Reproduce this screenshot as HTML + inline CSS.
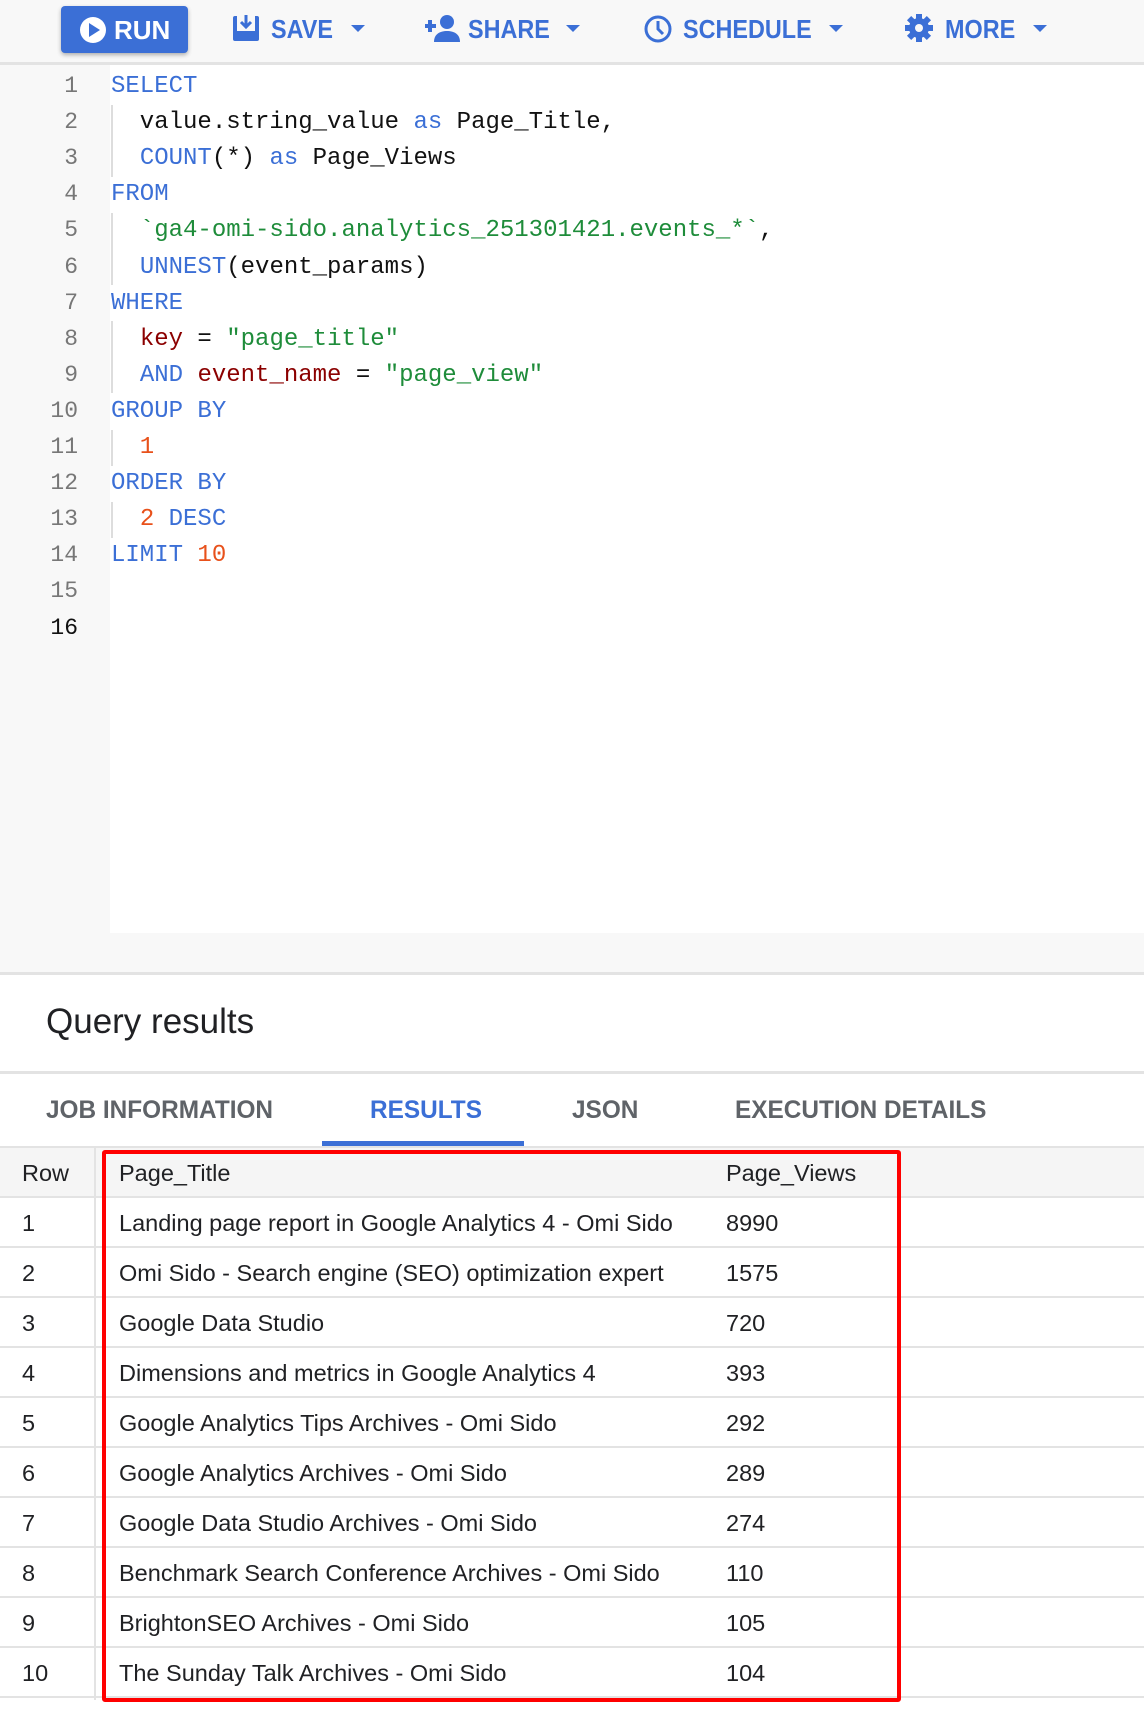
<!DOCTYPE html>
<html><head><meta charset="utf-8"><style>
*{margin:0;padding:0;box-sizing:border-box}
body{width:1144px;height:1722px;background:#fff;font-family:"Liberation Sans",sans-serif;position:relative;overflow:hidden}
.tb{position:absolute;left:0;top:0;width:1144px;height:65px;background:#f8f8f8;border-bottom:3px solid #e3e3e3}
.run{position:absolute;left:61px;top:6px;width:127px;height:47px;background:#3b6fd6;border-radius:4px;box-shadow:0 2px 4px rgba(0,0,0,.3);color:#fff;font-size:26px;font-weight:bold}
.lbl{position:absolute;top:14px;font-size:26px;color:#3b6fd6;font-weight:bold;transform:scaleX(.9);transform-origin:left}
.car{position:absolute;top:25px;width:0;height:0;border-left:7px solid transparent;border-right:7px solid transparent;border-top:7px solid #3b6fd6}
.code{position:absolute;left:0;top:65px;width:1144px;height:910px;background:#f8f8f8;border-bottom:3px solid #e3e3e3}
.ed{position:absolute;left:110px;top:0;width:1034px;height:868px;background:#fff}
.ln{position:absolute;left:0;width:78px;text-align:right;font-family:"Liberation Mono",monospace;font-size:23px;color:#777}
.cl{position:absolute;left:111px;font-family:"Liberation Mono",monospace;font-size:24px;color:#111;white-space:pre}
.k{color:#3b6fd6}.s{color:#1e8c3a}.n{color:#e8511b}.r{color:#8b0000}
.bar{position:absolute;left:111px;width:2px;background:#ddd}
h1{position:absolute;left:46px;top:1002px;font-weight:normal;font-size:35px;color:#202124}
.hr{position:absolute;left:0;width:1144px;height:3px;background:#e3e3e3}
.tab{position:absolute;top:1096px;font-size:25px;font-weight:bold;color:#5f6368;transform:scaleX(.975);transform-origin:left}
.row{position:absolute;left:0;width:1144px;height:50px;border-bottom:2px solid #e3e3e3;font-size:23.5px;color:#202124}
.row span{position:absolute;top:12px}
</style></head><body>
<div class="tb">
 <div class="run">
  <svg style="position:absolute;left:18px;top:10px" width="28" height="28" viewBox="0 0 28 28"><circle cx="14" cy="14" r="13" fill="#fff"/><path d="M10 7 L21 14 L10 21Z" fill="#3b6fd6"/></svg>
  <span style="position:absolute;left:53px;top:9px">RUN</span>
 </div>
 <svg style="position:absolute;left:232px;top:13px" width="28" height="30" viewBox="0 0 28 30"><rect x="1" y="3" width="26" height="25" rx="2" fill="#3b6fd6"/><rect x="5" y="0" width="18" height="18" fill="#f8f8f8"/><path d="M14 2v12M9 9l5 5 5-5" stroke="#3b6fd6" stroke-width="3" fill="none"/><rect x="4" y="20" width="20" height="5" fill="#3b6fd6"/></svg>
 <span class="lbl" style="left:271px">SAVE</span><div class="car" style="left:351px"></div>
 <svg style="position:absolute;left:425px;top:14px" width="36" height="28" viewBox="0 0 36 28"><path d="M5 6v12M-1 12h12" stroke="#3b6fd6" stroke-width="4"/><circle cx="22" cy="8" r="7" fill="#3b6fd6"/><path d="M9 28c0-8 6-11 13-11s13 3 13 11z" fill="#3b6fd6"/></svg>
 <span class="lbl" style="left:468px">SHARE</span><div class="car" style="left:566px"></div>
 <svg style="position:absolute;left:643px;top:14px" width="30" height="30" viewBox="0 0 30 30"><circle cx="15" cy="15" r="12" stroke="#3b6fd6" stroke-width="3" fill="none"/><path d="M15 7v8l5 5" stroke="#3b6fd6" stroke-width="3" fill="none"/></svg>
 <span class="lbl" style="left:683px">SCHEDULE</span><div class="car" style="left:829px"></div>
 <svg style="position:absolute;left:904px;top:13px" width="30" height="30" viewBox="0 0 30 30"><g fill="#3b6fd6"><circle cx="15" cy="15" r="10"/><rect x="12" y="1" width="6" height="28"/><rect x="1" y="12" width="28" height="6"/><rect x="12" y="1" width="6" height="28" transform="rotate(45 15 15)"/><rect x="12" y="1" width="6" height="28" transform="rotate(-45 15 15)"/></g><circle cx="15" cy="15" r="4" fill="#f8f8f8"/></svg>
 <span class="lbl" style="left:945px">MORE</span><div class="car" style="left:1033px"></div>
</div>
<div class="code">
 <div class="ed"></div>
 <div class="bar" style="top:40px;height:72px"></div>
 <div class="bar" style="top:148px;height:72px"></div>
 <div class="bar" style="top:256px;height:72px"></div>
 <div class="bar" style="top:365px;height:36px"></div>
 <div class="bar" style="top:437px;height:36px"></div>
</div>
<div style="position:absolute;left:0;top:73px">
<div class="ln" style="top:0">1</div><div class="cl k" style="top:0">SELECT</div>
<div class="ln" style="top:36.1px">2</div><div class="cl" style="top:36.1px">  value.string_value <span class="k">as</span> Page_Title,</div>
<div class="ln" style="top:72.2px">3</div><div class="cl" style="top:72.2px">  <span class="k">COUNT</span>(*) <span class="k">as</span> Page_Views</div>
<div class="ln" style="top:108.3px">4</div><div class="cl k" style="top:108.3px">FROM</div>
<div class="ln" style="top:144.4px">5</div><div class="cl" style="top:144.4px">  <span class="s">`ga4-omi-sido.analytics_251301421.events_*`</span>,</div>
<div class="ln" style="top:180.5px">6</div><div class="cl" style="top:180.5px">  <span class="k">UNNEST</span>(event_params)</div>
<div class="ln" style="top:216.6px">7</div><div class="cl k" style="top:216.6px">WHERE</div>
<div class="ln" style="top:252.7px">8</div><div class="cl" style="top:252.7px">  <span class="r">key</span> = <span class="s">"page_title"</span></div>
<div class="ln" style="top:288.8px">9</div><div class="cl" style="top:288.8px">  <span class="k">AND</span> <span class="r">event_name</span> = <span class="s">"page_view"</span></div>
<div class="ln" style="top:324.9px">10</div><div class="cl k" style="top:324.9px">GROUP BY</div>
<div class="ln" style="top:361px">11</div><div class="cl n" style="top:361px">  1</div>
<div class="ln" style="top:397.1px">12</div><div class="cl k" style="top:397.1px">ORDER BY</div>
<div class="ln" style="top:433.2px">13</div><div class="cl" style="top:433.2px">  <span class="n">2</span> <span class="k">DESC</span></div>
<div class="ln" style="top:469.3px">14</div><div class="cl k" style="top:469.3px">LIMIT <span class="n">10</span></div>
<div class="ln" style="top:505.4px">15</div>
<div class="ln" style="top:541.5px;color:#111">16</div>
</div>
<h1>Query results</h1>
<div class="hr" style="top:1071px"></div>
<span class="tab" style="left:46px">JOB INFORMATION</span>
<span class="tab" style="left:370px;color:#3b6fd6">RESULTS</span>
<span class="tab" style="left:572px">JSON</span>
<span class="tab" style="left:735px">EXECUTION DETAILS</span>
<div style="position:absolute;left:322px;top:1141px;width:202px;height:5px;background:#3b6fd6"></div>
<div class="hr" style="top:1146px;height:2px"></div>
<div class="row" style="top:1148px;background:#f5f5f5"><span style="left:22px">Row</span><span style="left:119px">Page_Title</span><span style="left:726px">Page_Views</span></div>
<div class="row" style="top:1198px"><span style="left:22px">1</span><span style="left:119px">Landing page report in Google Analytics 4 - Omi Sido</span><span style="left:726px">8990</span></div>
<div class="row" style="top:1248px"><span style="left:22px">2</span><span style="left:119px">Omi Sido - Search engine (SEO) optimization expert</span><span style="left:726px">1575</span></div>
<div class="row" style="top:1298px"><span style="left:22px">3</span><span style="left:119px">Google Data Studio</span><span style="left:726px">720</span></div>
<div class="row" style="top:1348px"><span style="left:22px">4</span><span style="left:119px">Dimensions and metrics in Google Analytics 4</span><span style="left:726px">393</span></div>
<div class="row" style="top:1398px"><span style="left:22px">5</span><span style="left:119px">Google Analytics Tips Archives - Omi Sido</span><span style="left:726px">292</span></div>
<div class="row" style="top:1448px"><span style="left:22px">6</span><span style="left:119px">Google Analytics Archives - Omi Sido</span><span style="left:726px">289</span></div>
<div class="row" style="top:1498px"><span style="left:22px">7</span><span style="left:119px">Google Data Studio Archives - Omi Sido</span><span style="left:726px">274</span></div>
<div class="row" style="top:1548px"><span style="left:22px">8</span><span style="left:119px">Benchmark Search Conference Archives - Omi Sido</span><span style="left:726px">110</span></div>
<div class="row" style="top:1598px"><span style="left:22px">9</span><span style="left:119px">BrightonSEO Archives - Omi Sido</span><span style="left:726px">105</span></div>
<div class="row" style="top:1648px"><span style="left:22px">10</span><span style="left:119px">The Sunday Talk Archives - Omi Sido</span><span style="left:726px">104</span></div>
<div style="position:absolute;left:94px;top:1148px;width:2px;height:552px;background:#e3e3e3"></div>
<div style="position:absolute;left:102px;top:1150px;width:799px;height:552px;border:4px solid #f00;border-radius:3px"></div>
</body></html>
